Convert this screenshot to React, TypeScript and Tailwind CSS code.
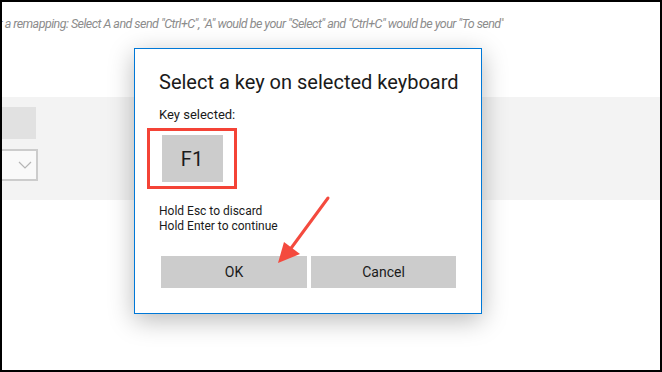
const font = "font-['Segoe_UI','Roboto',sans-serif]";

const Dropdown = () => (
  <div className="flex h-[32px] w-[36px] items-center justify-end border-2 border-l-0 border-[#cccccc] bg-[#f9f9f9] pr-[4px]">
    <svg width="14" height="8" viewBox="0 0 14 8" fill="none">
      <path d="M1 1l6 6 6-6" stroke="#b5b5b5" strokeWidth="1.2" />
    </svg>
  </div>
);

const KeyDialog = () => (
  <div
    className={`absolute left-[132px] top-[46px] flex h-[266px] w-[348px] flex-col border border-[#0078d7] bg-white px-[24px] pt-[19px] shadow-[0_6px_24px_rgba(0,0,0,0.28)] ${font}`}
  >
    <h2 className="whitespace-nowrap text-[20px] leading-[28px] text-[#1a1a1a]">Select a key on selected keyboard</h2>
    <p className="mt-[10px] text-[13px] leading-[18px] text-[#1a1a1a]">Key selected:</p>
    <div className="ml-[-12px] mt-[4px] flex h-[61px] w-[90px] items-center justify-center border-[3px] border-[#f44336]">
      <div className="flex h-[47px] w-[61px] items-center justify-center bg-[#cccccc] text-[20px] text-[#1a1a1a]">F1</div>
    </div>
    <div className="mt-[15px] text-[12px] leading-[15px] text-[#1a1a1a]">
      <p>Hold Esc to discard</p>
      <p>Hold Enter to continue</p>
    </div>
    <div className="mt-[22px] flex gap-[4px] pl-[2px]">
      <button className="h-[32px] w-[146px] bg-[#cccccc] text-[14px] text-[#1a1a1a]">OK</button>
      <button className="h-[32px] w-[145px] bg-[#cccccc] text-[14px] text-[#1a1a1a]">Cancel</button>
    </div>
  </div>
);

const Arrow = () => (
  <svg className="pointer-events-none absolute left-0 top-0" width="662" height="372">
    <line x1="326" y1="196" x2="287" y2="249" stroke="#f44a3e" strokeWidth="3" strokeLinecap="round" />
    <polygon points="276,261 282,240 298,252" fill="#f44a3e" />
  </svg>
);

export default function App() {
  return (
    <div className="relative h-[372px] w-[662px] overflow-hidden border-2 border-black bg-white">
      <div className="flex h-[40px] w-[502px] justify-end overflow-hidden pt-[13px]">
        <p className={`whitespace-nowrap text-[12.5px] italic tracking-[-0.55px] text-[#8c8c8c] ${font}`}>
          Example: for a remapping: Select A and send "Ctrl+C", "A" would be your "Select" and "Ctrl+C" would be your "To send"
        </p>
      </div>
      <div className="mt-[55px] flex h-[103px] flex-col gap-[10px] bg-[#f3f3f3] pt-[10px]">
        <div className="h-[32px] w-[34px] bg-[#e1e1e1]" />
        <Dropdown />
      </div>
      <KeyDialog />
      <Arrow />
    </div>
  );
}
